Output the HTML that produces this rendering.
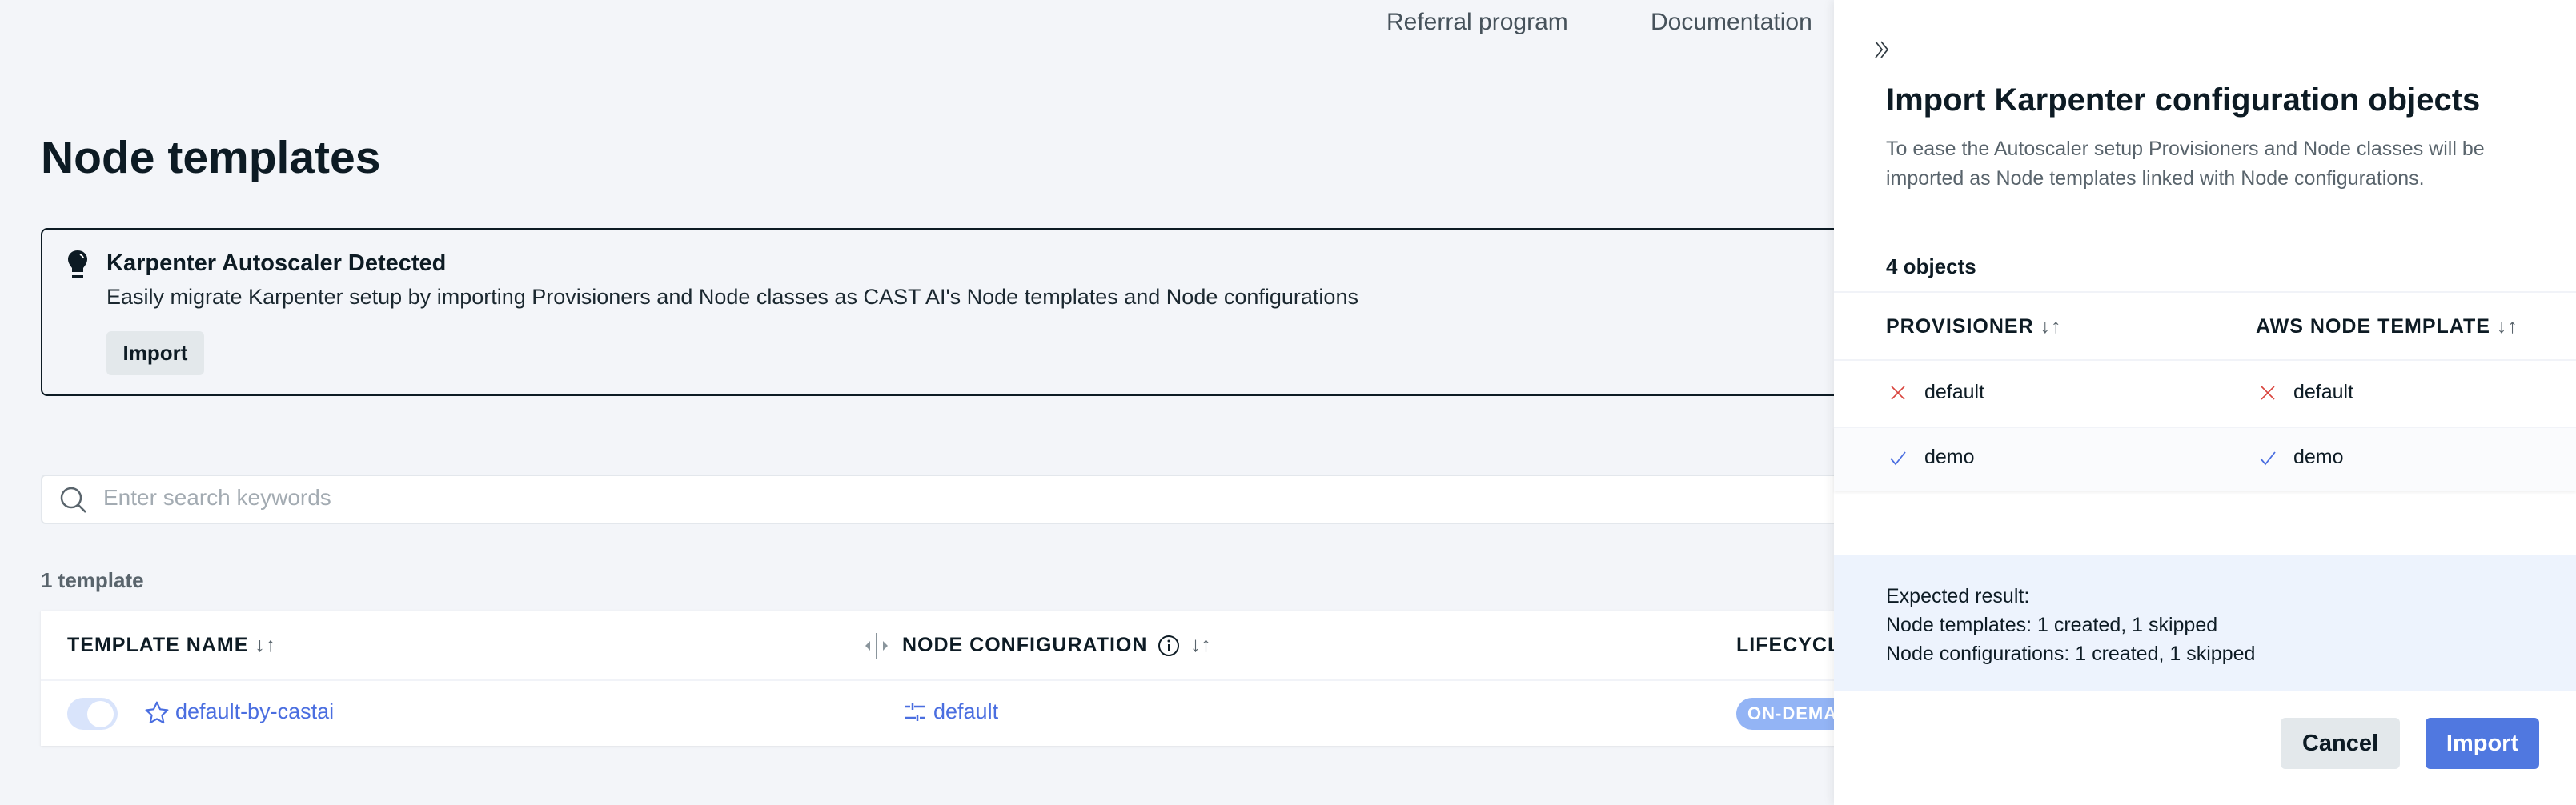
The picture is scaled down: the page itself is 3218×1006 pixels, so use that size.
<!DOCTYPE html>
<html><head><meta charset="utf-8"><style>
*{margin:0;padding:0;box-sizing:border-box}
body{width:3218px;height:1006px;background:#f3f5f9;font-family:"Liberation Sans",sans-serif;color:#0d1b24;position:relative;overflow:hidden}
.a{position:absolute;white-space:nowrap}
.hd{font-weight:bold;font-size:25px;letter-spacing:1px;color:#0d1b24}
</style></head><body>
<div class="a" style="left:1732px;top:11px;font-size:30px;color:#46525b">Referral program</div>
<div class="a" style="left:2062px;top:11px;font-size:30px;color:#46525b">Documentation</div>
<div class="a" style="left:51px;top:164px;font-size:57px;font-weight:bold">Node templates</div>

<div class="a" style="left:51px;top:285px;width:2300px;height:210px;border:2px solid #0d1b24;border-radius:8px"></div>
<svg class="a" style="left:82px;top:312px" width="30" height="38" viewBox="0 0 30 38"><path d="M15 1C7 1 3 7 3 12c0 5 3 8 5 11v5h14v-5c2-3 5-6 5-11C27 7 23 1 15 1z" fill="#0d1b24"/><path d="M18 6c2 1 4 3 4 5" stroke="#fff" stroke-width="2" fill="none"/><rect x="8" y="32" width="14" height="3" fill="#0d1b24"/></svg>
<div class="a" style="left:133px;top:313px;font-size:29px;font-weight:bold">Karpenter Autoscaler Detected</div>
<div class="a" style="left:133px;top:356px;font-size:27px;color:#1b2830">Easily migrate Karpenter setup by importing Provisioners and Node classes as CAST AI's Node templates and Node configurations</div>
<div class="a" style="left:133px;top:414px;width:122px;height:55px;background:#e3e8eb;border-radius:6px;font-size:26px;font-weight:bold;line-height:55px;text-align:center">Import</div>

<div class="a" style="left:51px;top:593px;width:2300px;height:62px;background:#fff;border:2px solid #e3e7ec;border-radius:6px"></div>
<svg class="a" style="left:74px;top:607px" width="36" height="36" viewBox="0 0 36 36"><circle cx="15" cy="15" r="12" stroke="#59646c" stroke-width="2.5" fill="none"/><path d="M24 24l9 9" stroke="#59646c" stroke-width="2.5"/></svg>
<div class="a" style="left:129px;top:606px;font-size:28px;color:#a3abb2">Enter search keywords</div>

<div class="a" style="left:51px;top:710px;font-size:26px;font-weight:bold;color:#59646c">1 template</div>

<div class="a" style="left:51px;top:763px;width:2300px;height:169px;background:#fff;box-shadow:0 1px 3px rgba(0,0,0,.08)"></div>
<div class="a" style="left:51px;top:849px;width:2300px;height:2px;background:#f1f3f8"></div>
<div class="a hd" style="left:84px;top:792px">TEMPLATE NAME <span style="color:#59646c;font-weight:normal">↓↑</span></div>
<svg class="a" style="left:1079px;top:790px" width="32" height="34" viewBox="0 0 32 34"><path d="M2 17l6-6v12z M30 17l-6-6v12z" fill="#8a959c"/><rect x="15" y="1" width="2" height="32" fill="#8a959c"/></svg>
<div class="a hd" style="left:1127px;top:792px">NODE CONFIGURATION</div>
<svg class="a" style="left:1445px;top:792px" width="30" height="30" viewBox="0 0 30 30"><circle cx="15" cy="15" r="12" stroke="#0d1b24" stroke-width="2" fill="none"/><path d="M15 13v9" stroke="#0d1b24" stroke-width="2"/><circle cx="15" cy="9" r="1.5" fill="#0d1b24"/></svg>
<div class="a" style="left:1487px;top:790px;font-size:26px;color:#59646c">↓↑</div>
<div class="a hd" style="left:2169px;top:792px">LIFECYCLE</div>

<div class="a" style="left:84px;top:872px;width:63px;height:40px;background:#d9e4fb;border-radius:20px"></div>
<div class="a" style="left:109px;top:876px;width:33px;height:33px;background:#fff;border-radius:50%"></div>
<svg class="a" style="left:180px;top:875px" width="32" height="32" viewBox="0 0 24 24"><path d="M12 2l3 6.5 7 .8-5.2 4.8 1.4 7L12 17.6 5.8 21.1l1.4-7L2 9.3l7-.8z" stroke="#4a6ee0" stroke-width="1.6" fill="none" stroke-linejoin="round"/></svg>
<div class="a" style="left:219px;top:874px;font-size:27px;color:#4a6ee0">default-by-castai</div>
<svg class="a" style="left:1130px;top:877px" width="26" height="26" viewBox="0 0 26 26"><path d="M1 6h6M12 6h13M1 20h13M19 20h6" stroke="#4a6ee0" stroke-width="2.5"/><path d="M10 2v8M16 16v8" stroke="#4a6ee0" stroke-width="2.5"/></svg>
<div class="a" style="left:1166px;top:874px;font-size:27px;color:#4a6ee0">default</div>
<div class="a" style="left:2169px;top:872px;width:200px;height:40px;background:#93b4f5;border-radius:20px;color:#fff;font-weight:bold;font-size:22px;line-height:40px;padding-left:14px;letter-spacing:1px">ON-DEMAND</div>

<div class="a" style="left:2291px;top:0;width:927px;height:1006px;background:#fff;box-shadow:-4px 0 10px rgba(0,0,0,.06)"></div>
<svg class="a" style="left:2340px;top:50px" width="22" height="24" viewBox="0 0 22 24"><path d="M3 2l8 10-8 10M10 2l8 10-8 10" stroke="#333d44" stroke-width="1.8" fill="none"/></svg>
<div class="a" style="left:2356px;top:103px;font-size:40px;font-weight:bold">Import Karpenter configuration objects</div>
<div class="a" style="left:2356px;top:168px;font-size:25px;line-height:37px;color:#59646c;white-space:normal;width:780px">To ease the Autoscaler setup Provisioners and Node classes will be imported as Node templates linked with Node configurations.</div>
<div class="a" style="left:2356px;top:318px;font-size:26px;font-weight:bold">4 objects</div>
<div class="a" style="left:2291px;top:364px;width:927px;height:2px;background:#f1f3f8"></div>
<div class="a hd" style="left:2356px;top:394px">PROVISIONER <span style="color:#59646c;font-weight:normal">↓↑</span></div>
<div class="a hd" style="left:2818px;top:394px">AWS NODE TEMPLATE <span style="color:#59646c;font-weight:normal">↓↑</span></div>
<div class="a" style="left:2291px;top:449px;width:927px;height:2px;background:#f1f3f8"></div>
<div class="a" style="left:2291px;top:533px;width:927px;height:81px;background:#fafbfd;border-top:2px solid #f1f3f8;box-shadow:0 2px 3px rgba(0,0,0,.05)"></div>
<svg class="a" style="left:2361px;top:481px" width="20" height="20" viewBox="0 0 20 20"><path d="M2 2l16 16M18 2L2 18" stroke="#d9453e" stroke-width="1.6"/></svg>
<div class="a" style="left:2404px;top:476px;font-size:25px">default</div>
<svg class="a" style="left:2823px;top:481px" width="20" height="20" viewBox="0 0 20 20"><path d="M2 2l16 16M18 2L2 18" stroke="#d9453e" stroke-width="1.6"/></svg>
<div class="a" style="left:2865px;top:476px;font-size:25px">default</div>
<svg class="a" style="left:2360px;top:563px" width="22" height="20" viewBox="0 0 22 20"><path d="M2 10l6 7L20 2" stroke="#4a6ee0" stroke-width="1.8" fill="none"/></svg>
<div class="a" style="left:2404px;top:557px;font-size:25px">demo</div>
<svg class="a" style="left:2822px;top:563px" width="22" height="20" viewBox="0 0 22 20"><path d="M2 10l6 7L20 2" stroke="#4a6ee0" stroke-width="1.8" fill="none"/></svg>
<div class="a" style="left:2865px;top:557px;font-size:25px">demo</div>

<div class="a" style="left:2291px;top:694px;width:927px;height:170px;background:#edf3fd"></div>
<div class="a" style="left:2356px;top:727px;font-size:25px;line-height:36px;color:#0d1b24">Expected result:<br>Node templates: 1 created, 1 skipped<br>Node configurations: 1 created, 1 skipped</div>

<div class="a" style="left:2849px;top:897px;width:149px;height:64px;background:#e3e8eb;border-radius:6px;font-size:29px;font-weight:bold;line-height:64px;text-align:center">Cancel</div>
<div class="a" style="left:3030px;top:897px;width:142px;height:64px;background:#5078e0;border-radius:6px;font-size:29px;font-weight:bold;line-height:64px;text-align:center;color:#fff">Import</div>
</body></html>
